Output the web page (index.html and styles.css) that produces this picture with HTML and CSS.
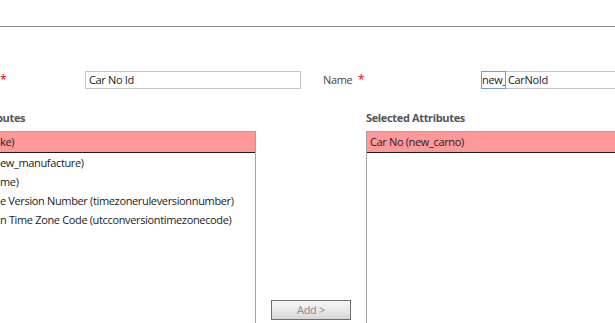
FILE: index.html
```html
<!DOCTYPE html>
<html>
<head>
<meta charset="utf-8">
<link rel="stylesheet" href="styles.css">
</head>
<body>
<div class="page">
  <div class="header"></div>
  <div class="form-row">
    <div class="left-field">
      <span class="req">*</span>
      <div class="text-input">Car No Id</div>
    </div>
    <div class="right-field">
      <span class="label">Name</span><span class="req req-name">*</span>
      <div class="prefix">new_</div>
      <div class="text-input wide">CarNoId</div>
    </div>
  </div>
  <div class="heads">
    <div class="head head-left">butes</div>
    <div class="head head-right">Selected Attributes</div>
  </div>
  <div class="lists">
    <div class="list list-left">
      <div class="item selected">ke)</div>
      <div class="item">ew_manufacture)</div>
      <div class="item">me)</div>
      <div class="item">e Version Number (timezoneruleversionnumber)</div>
      <div class="item">n Time Zone Code (utcconversiontimezonecode)</div>
    </div>
    <div class="middle">
      <div class="btn">Add &gt;</div>
    </div>
    <div class="list list-right">
      <div class="item selected">Car No (new_carno)</div>
    </div>
  </div>
</div>
</body>
</html>
```
FILE: styles.css
```css
html, body {
  margin: 0;
  padding: 0;
  background: #ffffff;
  overflow: hidden;
}
body {
  font-family: "Open Sans", "Noto Sans", sans-serif;
  font-size: 11px;
  letter-spacing: -0.35px;
  color: #222222;
  width: 615px;
  height: 323px;
}
.page {
  width: 615px;
  overflow: hidden;
}
.header {
  height: 26px;
  border-bottom: 1px solid #8d8d96;
}
.form-row {
  display: flex;
  margin-top: 44px;
  height: 18px;
  align-items: center;
}
.left-field {
  display: flex;
  align-items: center;
  width: 323px;
  flex: none;
}
.req {
  color: #e00000;
  font-size: 12px;
  line-height: 18px;
  align-self: flex-start;
  margin-top: 0;
}
.left-field .req {
  width: 82px;
  flex: none;
}
.text-input {
  box-sizing: border-box;
  width: 216px;
  height: 18px;
  border: 1px solid #c4c4c4;
  padding-left: 3px;
  line-height: 16px;
  color: #222222;
  flex: none;
}
.left-field .text-input {
  margin-left: 3px;
}
.right-field {
  display: flex;
  align-items: center;
  flex: none;
  width: 300px;
}
.label {
  color: #444444;
  line-height: 18px;
  width: 35px;
  flex: none;
}
.req-name {
  width: 123px;
  flex: none;
}
.prefix {
  box-sizing: border-box;
  width: 25px;
  height: 18px;
  border: 1px solid #6f9fd6;
  line-height: 16px;
  padding-left: 0;
  color: #222222;
  overflow: hidden;
  white-space: nowrap;
  flex: none;
}
.text-input.wide {
  width: 140px;
  border-left: none;
  padding-left: 2px;
}
.heads {
  display: flex;
  margin-top: 22px;
  height: 14px;
  line-height: 14px;
}
.head {
  font-weight: bold;
  color: #555555;
}
.head-left {
  width: 366px;
  margin-left: -4px;
  flex: none;
}
.head-right {
  margin-left: 4px;
}
.lists {
  display: grid;
  grid-template-columns: 256px 110px 260px;
  margin-top: 6px;
  height: 200px;
}
.list {
  box-sizing: border-box;
  border: 1px solid #a3a3a3;
  height: 200px;
}
.list-left {
  border-left: none;
}
.list-right {
  border-right: none;
}
.item {
  height: 19px;
  line-height: 19px;
  white-space: nowrap;
  overflow: hidden;
  color: #222222;
}
.list-right .item {
  padding-left: 3px;
}
.item.selected {
  background: #ff9999;
  height: 20px;
  line-height: 20px;
  border-bottom: 1px solid #1a1a1a;
}
.middle {
  display: flex;
  align-items: flex-end;
  padding-left: 15px;
  padding-bottom: 11px;
}
.btn {
  box-sizing: border-box;
  width: 80px;
  height: 20px;
  border: 1px solid #6e6e6e;
  background: linear-gradient(#f7f7f7, #e6e6e6 60%, #d6d6d6);
  color: #8a8a8a;
  text-align: center;
  line-height: 18px;
  font-size: 11px;
}
```
